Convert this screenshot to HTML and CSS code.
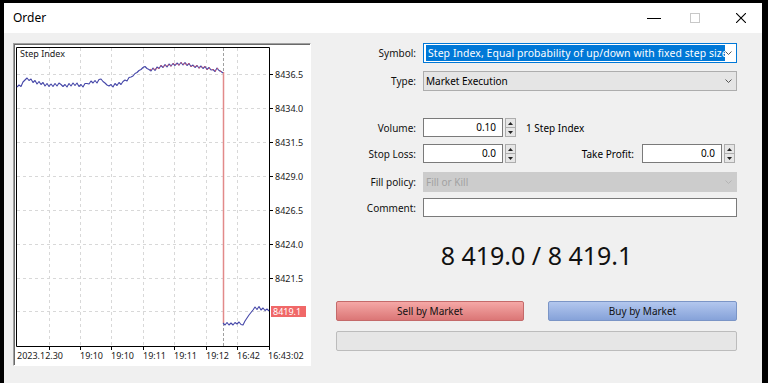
FILE: index.html
```html
<!DOCTYPE html>
<html>
<head>
<meta charset="utf-8">
<title>Order</title>
<link rel="stylesheet" href="styles.css">
</head>
<body>
<div class="window">
  <div class="titlebar">
    <span class="title">Order</span>
    <div class="controls">
      <svg class="ctl-min" width="14" height="10" viewBox="0 0 14 10"><path d="M0 5.5 H14" stroke="#000" stroke-width="1"/></svg>
      <svg class="ctl-max" width="10" height="10" viewBox="0 0 10 10"><rect x="0.5" y="0.5" width="9" height="9" fill="none" stroke="#c8c8c8"/></svg>
      <svg class="ctl-close" width="10" height="10" viewBox="0 0 10 10"><path d="M0 0 L10 10 M10 0 L0 10" stroke="#000" stroke-width="1.1"/></svg>
    </div>
  </div>
  <div class="content">
    <div class="chart-panel">
      <svg class="chart" width="295" height="320" viewBox="0 0 295 320">
        <g transform="translate(-15 -45)">
          <g class="grid" stroke="#d8d8d8" stroke-dasharray="3 3" stroke-width="1">
            <path d="M49.5 48 V346 M80.5 48 V346 M111.5 48 V346 M143.5 48 V346 M174.5 48 V346 M206.5 48 V346 M237.5 48 V346"/>
            <path d="M17 74.5 H269 M17 108.5 H269 M17 142.5 H269 M17 176.5 H269 M17 210.5 H269 M17 244.5 H269 M17 278.5 H269 M17 311.5 H269"/>
          </g>
          <path d="M223.5 48 V346" stroke="#a0a0a0" stroke-dasharray="3 2"/>
          <path d="M16.5 47.5 H269.5 V346.5 H16.5 Z" fill="none" stroke="#000"/>
          <g stroke="#000">
            <path d="M269 74.5 H273 M269 108.5 H273 M269 142.5 H273 M269 176.5 H273 M269 210.5 H273 M269 244.5 H273 M269 278.5 H273"/>
            <path d="M49.5 346 V350 M80.5 346 V350 M111.5 346 V350 M143.5 346 V350 M174.5 346 V350 M206.5 346 V350 M237.5 346 V350 M269.5 346 V350"/>
          </g>
          <path d="M223.5 72 V323" stroke="#e28a8a" stroke-width="1.5"/>
          <polyline fill="none" stroke="#4446a8" stroke-width="1.1" stroke-linejoin="round" points="17,87 19,85 21,86.5 23,82 25,80 27,78 29,80.5 31,79 33,82.5 35,80.5 37,84 39,81.5 41,84.5 43,82.5 45,86 47,83.5 49,86.5 51,84 53,86.5 55,83.5 57,86 59,83 61,84.5 63,86.5 65,84.5 67,87 69,83.5 71,86 73,83 75,85.5 77,83 79,86.5 81,84.5 83,87 85,83.5 87,83.5 89,84 91,81 93,83 95,80.5 97,83 99,79.5 101,79 103,81.5 105,83 107,85 109,86 111,84.5 113,87 115,83.5 117,85.5 119,82.5 121,84.5 123,81.5 125,80 127,81 129,77.5 131,77 133,76 135,73.5 137,72.5 139,70.5 141,69.5 143,67.5 145,66.5 147,68.5 149,69.5 151,71 153,68 155,70.5 157,67 159,68.5 161,65.5 163,67.5 165,64.5 167,67 169,64 171,66 173,63.5 175,65.5 177,63 179,65 181,62.5 183,65 185,62.5 187,65.5 189,63.5 191,66.5 193,65 195,67.5 197,65.5 199,68 201,66 203,68.5 205,66.5 207,69.5 209,67.5 211,70 213,69.5 215,71.5 217,68 219,70.5 221,71.5 223,73"/>
          <polyline fill="none" stroke="#c8506e" stroke-width="1.1" stroke-dasharray="1.5 2.5" stroke-linejoin="round" points="150,70 153,68 155,70.5 157,67 159,68.5 161,65.5 163,67.5 165,64.5 167,67 169,64 171,66 173,63.5 175,65.5 177,63 179,65 181,62.5 183,65 185,62.5 187,65.5 189,63.5 191,66.5 193,65 195,67.5 197,65.5 199,68 201,66 203,68.5 205,66.5 207,69.5 209,67.5 211,70 213,69.5 215,71.5 217,68 219,70.5 221,71.5 223,73"/>
          <polyline fill="none" stroke="#4446a8" stroke-width="1.1" stroke-linejoin="round" points="223,323 225,325 227,322.5 229,325 231,323 233,325 235,322.5 237,324 239,322 241,324.5 243,325 245,321 247,318 249,315 251,312.5 253,310 255,307 257,309.5 259,306.5 261,310 263,308 265,310.5 267,309 269,311"/>
          <g class="axis-text" font-size="9" fill="#1a1a1a">
            <text x="20" y="57">Step Index</text>
            <text x="275" y="77.5">8436.5</text>
            <text x="275" y="111.5">8434.0</text>
            <text x="275" y="145.5">8431.5</text>
            <text x="275" y="179.5">8429.0</text>
            <text x="275" y="213.5">8426.5</text>
            <text x="275" y="247.5">8424.0</text>
            <text x="275" y="281.5">8421.5</text>
            <text x="17" y="359">2023.12.30</text>
            <text x="80" y="359">19:10</text>
            <text x="111" y="359">19:10</text>
            <text x="143" y="359">19:11</text>
            <text x="174" y="359">19:11</text>
            <text x="206" y="359">19:12</text>
            <text x="237" y="359">16:42</text>
            <text x="268" y="359">16:43:02</text>
          </g>
          <rect x="271" y="306" width="35" height="11" fill="#f06868"/>
          <text class="axis-text" x="273" y="314.5" font-size="9" fill="#fff">8419.1</text>
        </g>
      </svg>
    </div>
    <div class="form">
      <div class="row row-symbol">
        <span class="lbl">Symbol:</span>
        <div class="combo combo-focus">
          <span class="sel">Step Index, Equal probability of up/down with fixed step size(1)</span>
          <svg class="chev" width="7" height="4" viewBox="0 0 7 4"><path d="M0.5 0.5 L3.5 3.5 L6.5 0.5" fill="none" stroke="#555"/></svg>
        </div>
      </div>
      <div class="row row-type">
        <span class="lbl">Type:</span>
        <div class="combo combo-gray">
          <span class="ctext">Market Execution</span>
          <svg class="chev" width="7" height="4" viewBox="0 0 7 4"><path d="M0.5 0.5 L3.5 3.5 L6.5 0.5" fill="none" stroke="#555"/></svg>
        </div>
      </div>
      <div class="row row-volume">
        <span class="lbl">Volume:</span>
        <div class="field">0.10</div>
        <div class="spin">
          <span class="spin-half"><svg width="5" height="3" viewBox="0 0 5 3"><path d="M2.5 0 L5 3 H0 Z" fill="#222"/></svg></span>
          <span class="spin-half"><svg width="5" height="3" viewBox="0 0 5 3"><path d="M0 0 H5 L2.5 3 Z" fill="#222"/></svg></span>
        </div>
        <span class="note">1 Step Index</span>
      </div>
      <div class="row row-sl">
        <span class="lbl">Stop Loss:</span>
        <div class="field">0.0</div>
        <div class="spin">
          <span class="spin-half"><svg width="5" height="3" viewBox="0 0 5 3"><path d="M2.5 0 L5 3 H0 Z" fill="#222"/></svg></span>
          <span class="spin-half"><svg width="5" height="3" viewBox="0 0 5 3"><path d="M0 0 H5 L2.5 3 Z" fill="#222"/></svg></span>
        </div>
        <span class="tp-lbl">Take Profit:</span>
        <div class="field field-tp">0.0</div>
        <div class="spin">
          <span class="spin-half"><svg width="5" height="3" viewBox="0 0 5 3"><path d="M2.5 0 L5 3 H0 Z" fill="#222"/></svg></span>
          <span class="spin-half"><svg width="5" height="3" viewBox="0 0 5 3"><path d="M0 0 H5 L2.5 3 Z" fill="#222"/></svg></span>
        </div>
      </div>
      <div class="row row-fill">
        <span class="lbl">Fill policy:</span>
        <div class="combo combo-disabled">
          <span class="ctext">Fill or Kill</span>
          <svg class="chev" width="7" height="4" viewBox="0 0 7 4"><path d="M0.5 0.5 L3.5 3.5 L6.5 0.5" fill="none" stroke="#b4b4b4"/></svg>
        </div>
      </div>
      <div class="row row-comment">
        <span class="lbl">Comment:</span>
        <div class="field field-wide"></div>
      </div>
      <div class="price">8 419.0 / 8 419.1</div>
      <div class="buttons">
        <div class="btn btn-sell">Sell by Market</div>
        <div class="btn btn-buy">Buy by Market</div>
      </div>
      <div class="progress"></div>
    </div>
  </div>
</div>
</body>
</html>
```

FILE: styles.css
```css
html, body {
  margin: 0;
  padding: 0;
}
body {
  background: #000;
  width: 768px;
  height: 383px;
  overflow: hidden;
  font-family: "Noto Sans", "DejaVu Sans", sans-serif;
  color: #000;
}
.window {
  margin: 3px 0 0 4px;
  width: 758px;
  height: 380px;
  background: #f0f0f0;
}
.titlebar {
  height: 30px;
  background: #fff;
  display: flex;
  align-items: center;
  padding-left: 9px;
}
.title {
  font-size: 12px;
  line-height: 16px;
}
.controls {
  margin-left: auto;
  display: flex;
  align-items: center;
  padding-right: 16px;
}
.controls svg {
  display: block;
}
.ctl-max {
  margin-left: 29px;
}
.ctl-close {
  margin-left: 36px;
}
.content {
  display: flex;
  align-items: flex-start;
}
.chart-panel {
  margin: 10px 0 0 9px;
  width: 298px;
  height: 323px;
  box-sizing: border-box;
  border-top: 1px solid #a0a0a0;
  border-left: 1px solid #a0a0a0;
  border-right: 1px solid #ffffff;
  border-bottom: 1px solid #ffffff;
  box-shadow: inset 1px 1px 0 #6a6a6a;
  padding: 1px 0 0 1px;
  background: #fff;
}
.chart {
  display: block;
}
.axis-text, .axis-text text {
  font-family: "Noto Sans", "DejaVu Sans", sans-serif;
}
.form {
  margin-left: 25px;
  width: 401px;
  padding-top: 10px;
  font-size: 10px;
}
.row {
  display: flex;
  align-items: center;
}
.lbl {
  width: 80px;
  margin-right: 7px;
  text-align: right;
  white-space: nowrap;
  color: #111;
}
.row-symbol { height: 20px; }
.row-type { height: 20px; margin-top: 8px; }
.row-volume { height: 19px; margin-top: 27px; }
.row-sl { height: 19px; margin-top: 7px; }
.row-fill { height: 20px; margin-top: 9px; }
.row-comment { height: 19px; margin-top: 6px; }
.combo {
  width: 314px;
  height: 100%;
  box-sizing: border-box;
  border: 1px solid #adadad;
  display: flex;
  align-items: center;
  background: #fff;
}
.combo-focus {
  border-color: #0078d7;
}
.sel {
  display: block;
  width: 298px;
  margin-left: 2px;
  padding-left: 2px;
  height: 16px;
  line-height: 16px;
  font-size: 10.4px;
  letter-spacing: 0.1px;
  background: #0078d7;
  color: #fff;
  white-space: nowrap;
  overflow: hidden;
}
.chev {
  display: block;
  margin-left: auto;
  margin-right: 4px;
}
.combo-gray {
  background: #e5e5e5;
}
.combo-disabled {
  background: #cccccc;
  border-color: #cccccc;
  color: #a2a2a2;
}
.ctext {
  padding-left: 2px;
  white-space: nowrap;
}
.field {
  width: 80px;
  height: 19px;
  box-sizing: border-box;
  border: 1px solid #7a7a7a;
  background: #fff;
  text-align: right;
  padding-right: 6px;
  line-height: 17px;
}
.field-wide {
  width: 314px;
}
.field-tp {
  margin-left: 8px;
}
.spin {
  margin-left: 2px;
  width: 11px;
  height: 19px;
  box-sizing: border-box;
  border: 1px solid #adadad;
  background: #e6e6e6;
  display: flex;
  flex-direction: column;
}
.spin-half {
  flex: 1;
  display: flex;
  align-items: center;
  justify-content: center;
}
.spin-half + .spin-half {
  border-top: 1px solid #adadad;
}
.spin-half svg {
  display: block;
}
.note {
  margin-left: 10px;
  white-space: nowrap;
}
.tp-lbl {
  width: 118px;
  text-align: right;
  white-space: nowrap;
}
.price {
  margin-top: 23px;
  height: 30px;
  line-height: 30px;
  font-size: 25px;
  text-align: center;
  color: #111;
  white-space: nowrap;
}
.buttons {
  display: flex;
  gap: 24px;
  margin-top: 31px;
}
.btn {
  height: 20px;
  box-sizing: border-box;
  display: flex;
  align-items: center;
  justify-content: center;
  border-radius: 2px;
  color: #111;
}
.btn-sell {
  width: 188px;
  background: linear-gradient(#f5a8a6, #db7676);
  border: 1px solid #c46a6a;
}
.btn-buy {
  width: 189px;
  background: linear-gradient(#b3c7ee, #86a2d9);
  border: 1px solid #7b95c6;
}
.progress {
  margin-top: 10px;
  width: 401px;
  height: 20px;
  box-sizing: border-box;
  border: 1px solid #bcbcbc;
  border-radius: 2px;
  background: #e6e6e6;
}
```
